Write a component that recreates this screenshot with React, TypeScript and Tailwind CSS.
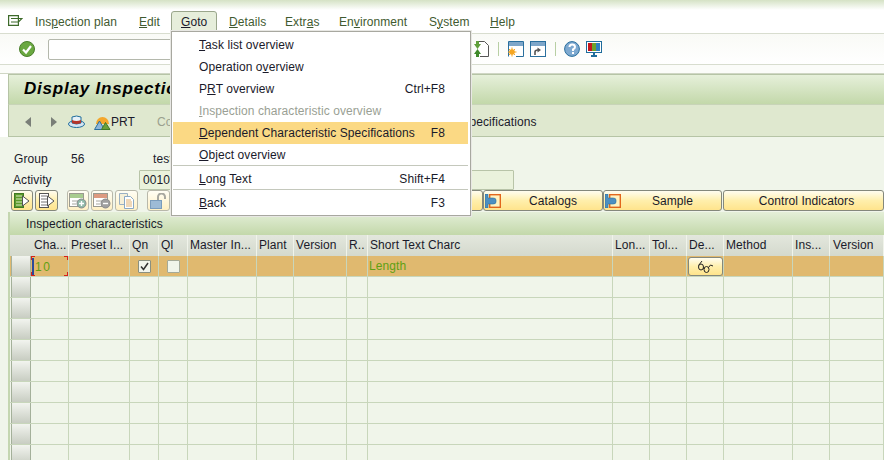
import type { ReactNode } from "react";

const font = "font-['Liberation_Sans',Arial,sans-serif]";

const menus = [
  { pre: "Ins", u: "p", post: "ection plan", w: "w-[104px]" },
  { pre: "", u: "E", post: "dit", w: "w-[42px]" },
  { pre: "", u: "G", post: "oto", w: "w-[48px]", active: true },
  { pre: "", u: "D", post: "etails", w: "w-[56px]" },
  { pre: "Extr", u: "a", post: "s", w: "w-[54px]" },
  { pre: "En", u: "v", post: "ironment", w: "w-[90px]" },
  { pre: "S", u: "y", post: "stem", w: "w-[61px]" },
  { pre: "", u: "H", post: "elp", w: "w-[40px]" },
];

const gotoItems = [
  { pre: "", u: "T", post: "ask list overview", key: "" },
  { pre: "Operation o", u: "v", post: "erview", key: "" },
  { pre: "P", u: "R", post: "T overview", key: "Ctrl+F8" },
  { pre: "", u: "I", post: "nspection characteristic overview", key: "", disabled: true },
  { pre: "", u: "D", post: "ependent Characteristic Specifications", key: "F8", selected: true },
  { pre: "", u: "O", post: "bject overview", key: "" },
  { sep: true, pre: "", u: "L", post: "ong Text", key: "Shift+F4" },
  { sep: true, pre: "", u: "B", post: "ack", key: "F3" },
];

const columns = [
  { label: "Cha...", w: "w-[38px] pl-[3px]" },
  { label: "Preset I...", w: "w-[61px] pl-[2px]" },
  { label: "Qn", w: "w-[29px] pl-[2px]" },
  { label: "Ql", w: "w-[29px] pl-[2px]" },
  { label: "Master In...", w: "w-[69px] pl-[2px]" },
  { label: "Plant", w: "w-[37px] pl-[2px]" },
  { label: "Version", w: "w-[53px] pl-[2px]" },
  { label: "R..", w: "w-[21px] pl-[2px]" },
  { label: "Short Text Charc", w: "w-[245px] pl-[2px]" },
  { label: "Lon...", w: "w-[37px] pl-[2px]" },
  { label: "Tol...", w: "w-[37px] pl-[2px]" },
  { label: "De...", w: "w-[37px] pl-[2px]" },
  { label: "Method", w: "w-[69px] pl-[2px]" },
  { label: "Ins...", w: "w-[37px] pl-[2px]" },
  { label: "Version", w: "w-[54px] pl-[3px]" },
];

function CheckIcon() {
  return (
    <svg width="16" height="16" viewBox="0 0 16 16">
      <circle cx="8" cy="8" r="7.5" fill="#6aa840" stroke="#4a7f2c" />
      <path d="M4 8.5 7 11.5 12 5" fill="none" stroke="#fff" strokeWidth="2.2" />
    </svg>
  );
}

function PageArrows() {
  return (
    <svg width="16" height="16" viewBox="0 0 16 16">
      <path d="M6 .5h5.500l4 4v11H7" fill="#fff" stroke="#555" />
      <path d="M3 0h3v3h2L4.500 8 1 3h2z" fill="#5f9f3a" />
      <path d="M4.500 8 8 13H6v3H3v-3H1z" fill="#3f8a2a" />
    </svg>
  );
}

function NewSession() {
  return (
    <svg width="16" height="16" viewBox="0 0 16 16">
      <path d="M.5 15.500V.5h15v15H8" fill="#fff" stroke="#2a6f9e" />
      <rect x="1" y="1" width="14" height="4" fill="#7ea6c9" />
      <circle cx="4" cy="11" r="2.800" fill="#f5a623" />
      <path d="M4 6.500v9M-.5 11h9M1 8l6 6M7 8l-6 6" stroke="#f5a623" />
    </svg>
  );
}

function Shortcut() {
  return (
    <svg width="16" height="16" viewBox="0 0 16 16">
      <rect x=".5" y=".5" width="15" height="15" fill="#fff" stroke="#2a6f9e" />
      <rect x="1" y="1" width="14" height="4" fill="#7ea6c9" />
      <path d="M5 14v-3q0-2 3-2" fill="none" stroke="#555" strokeWidth="1.600" />
      <path d="M7.500 6.500 11 9l-3.500 2.500z" fill="#555" />
    </svg>
  );
}

function HelpIcon() {
  return (
    <svg width="16" height="16" viewBox="0 0 16 16">
      <circle cx="8" cy="8" r="7.400" fill="#7ea9d0" stroke="#2a6f9e" />
      <path d="M5.500 6q0-2.500 2.700-2.500T11 6q0 1.500-2 2.400V10" fill="none" stroke="#fff" strokeWidth="2" />
      <rect x="8" y="11" width="2" height="2" fill="#fff" />
    </svg>
  );
}

function MonitorIcon() {
  return (
    <svg width="16" height="16" viewBox="0 0 16 16">
      <rect x=".5" y=".5" width="15" height="11" fill="#fff" stroke="#1f6c9c" />
      <rect x="2" y="2" width="4" height="8" fill="#c4161c" />
      <rect x="6" y="2" width="4" height="8" fill="#6fa32b" />
      <rect x="10" y="2" width="4" height="8" fill="#2f7fc1" />
      <path d="M7 12h2v2h2v2H5v-2h2z" fill="#1f6c9c" />
    </svg>
  );
}

function Hat() {
  return (
    <svg width="17" height="13" viewBox="0 0 17 13">
      <ellipse cx="8.500" cy="9" rx="8" ry="3.500" fill="#d4e4f2" stroke="#1f6c9c" />
      <path d="M4 8V2q4.500-2 9 0v6q-4.500 2-9 0z" fill="#e8f1f8" stroke="#1f6c9c" />
      <path d="M4 5q4.500 2 9 0v3q-4.500 2-9 0z" fill="#b5342a" />
    </svg>
  );
}

function Mountains() {
  return (
    <svg width="17" height="16" viewBox="0 0 17 16">
      <path d="M2 10a6.500 7 0 0 1 13 0z" fill="#f4a72c" />
      <path d="M.5 15.500 5.500 7l5 8.500z" fill="#8fb5d8" stroke="#2a6f9e" />
      <path d="M7.500 15.500 11.500 8.500l4.500 7z" fill="#6a9f3a" stroke="#3f7a25" />
    </svg>
  );
}

function ListSelect({ filled }: { filled?: boolean }) {
  return (
    <svg width="16" height="15" viewBox="0 0 16 15">
      <rect x=".5" y=".5" width="9" height="14" fill={filled ? "#5e9a2a" : "#fff"} stroke={filled ? "#3f7a25" : "#555"} />
      <path d="M2 3h6M2 6h6M2 9h6M2 12h6" stroke={filled ? "#d8ecc0" : "#777"} />
      <path d="M8.500 3v10l6.500-5z" fill="#fff" stroke="#555" />
    </svg>
  );
}

function RowOp({ minus }: { minus?: boolean }) {
  return (
    <svg width="18" height="16" viewBox="0 0 18 16">
      <rect x=".5" y=".5" width="14" height="13" fill="#fff" stroke="#9a9a90" />
      <rect x="1" y="1" width="13" height="4" fill={minus ? "#dd9a80" : "#a8cc90"} />
      <path d="M3 8h7M3 11h4" stroke="#a8a8a0" />
      <circle cx="12.500" cy="10.500" r="4.500" fill={minus ? "#a0a0a0" : "#8eb8a8"} stroke="#8a8a8a" />
      <path d={minus ? "M10 10.500h5" : "M10 10.500h5M12.500 8v5"} stroke="#fff" strokeWidth="1.400" />
    </svg>
  );
}

function CopyDoc() {
  return (
    <svg width="16" height="16" viewBox="0 0 16 16">
      <path d="M.5.5h8v11h-8z" fill="#f6f0d8" stroke="#9ab0c4" />
      <path d="M5.500 3.500h6l3 3v9h-9z" fill="#fff" stroke="#8aa8c4" />
      <path d="M7 7h5M7 9h6M7 11h6M7 13h6" stroke="#e0b070" />
    </svg>
  );
}

function Lock() {
  return (
    <svg width="18" height="16" viewBox="0 0 18 16">
      <rect x=".5" y="7.500" width="11" height="8" fill="#9dbbd6" stroke="#7a9cbc" />
      <path d="M8 7V4a3.500 3.500 0 0 1 7 0v2" fill="none" stroke="#a8a8a0" strokeWidth="2" />
    </svg>
  );
}

function TabFlag() {
  return (
    <svg width="16" height="14" viewBox="0 0 16 14">
      <rect x="4.700" y=".7" width="10.600" height="12.600" fill="#fff3c0" stroke="#e2661c" strokeWidth="1.400" />
      <path d="M0 0h3v4h5q3 0 3 2v2q0 2-3 2H3v4H0z" fill="#4d8fc0" stroke="#2a6f9e" strokeWidth=".6" />
    </svg>
  );
}

function Glasses() {
  return (
    <svg width="17" height="13" viewBox="0 0 17 13" fill="none" stroke="#222">
      <path d="M1.500 5.500 5 1" />
      <ellipse cx="4" cy="7" rx="2.500" ry="3" />
      <ellipse cx="9.500" cy="9.500" rx="2.500" ry="3" />
      <path d="M6 8l1.500.5M11.500 7.500l2-2.500 2.500 1" />
    </svg>
  );
}

function SapButton({ className, children, muted }: { className: string; children: ReactNode; muted?: boolean }) {
  return (
    <div
      className={`flex h-[21px] shrink-0 items-center justify-center rounded-[3px] border ${
        muted
          ? "border-[#b8b8aa] bg-gradient-to-b from-[#fffef4] to-[#fff0c4]"
          : "border-[#84887c] bg-gradient-to-b from-[#fffdf0] via-[#ffefac] to-[#ffe48c]"
      } ${className}`}
    >
      {children}
    </div>
  );
}

function FlagButton({ label, className }: { label: string; className: string }) {
  return (
    <SapButton className={`relative pl-[20px] ${className}`}>
      <span className="absolute left-px top-[3px]">
        <TabFlag />
      </span>
      <span>{label}</span>
    </SapButton>
  );
}

export default function App() {
  return (
    <div className={`relative h-[460px] w-[884px] overflow-hidden bg-white text-[12px] tracking-[0.08px] text-[#1a1a2a] ${font}`}>
      {/* menu bar */}
      <div className="h-[10px] bg-gradient-to-b from-[#d5e2c5] to-white" />
      <div className="flex h-[24px] items-center border-b border-[#d8ddcf] pl-[8px]">
        <svg width="15" height="11" viewBox="0 0 15 11" className="mb-[3px] mr-[12px]" fill="none" stroke="#3d6a2a" strokeWidth="1.200">
          <path d="M.6.6h9.800v9.800H.6zM3 3.500h11L10.500 7H3" />
        </svg>
        {menus.map((m) => (
          <div key={m.u + m.pre} className={`${m.w} shrink-0`}>
            <span
              className={
                m.active
                  ? "-ml-[10px] inline-block h-[21px] w-[46px] rounded-t-[3px] border border-[#9aa68c] bg-[#e6eedb] pl-[9px] leading-[20px] text-[#1a1a2a]"
                  : "text-[#3f5a30]"
              }
            >
              {m.pre}
              <u>{m.u}</u>
              {m.post}
            </span>
          </div>
        ))}
      </div>

      {/* system toolbar */}
      <div className="flex h-[31px] items-center border-b border-[#d8ddcf] bg-gradient-to-b from-[#f9faf6] to-white pl-[19px]">
        <CheckIcon />
        <div className="ml-[13px] h-[21px] w-[160px] rounded-[2px] border border-[#b4b8ac] bg-white" />
        <div className="ml-[265px]">
          <PageArrows />
        </div>
        <div className="ml-[9px] h-[14px] w-px bg-[#b8cfa4]" />
        <div className="ml-[9px]">
          <NewSession />
        </div>
        <div className="ml-[6px]">
          <Shortcut />
        </div>
        <div className="ml-[9px] h-[14px] w-px bg-[#b8cfa4]" />
        <div className="ml-[8px]">
          <HelpIcon />
        </div>
        <div className="ml-[6px]">
          <MonitorIcon />
        </div>
      </div>
      <div className="h-[9px] border-b border-[#cfd6c4] bg-[#fbfcf9]" />

      {/* screen */}
      <div className="h-[386px] pl-[8px]">
        <div className="flex h-[30px] items-center whitespace-nowrap border-l border-t border-[#b6c4a6] bg-gradient-to-b from-[#e6f0da] to-[#c3d8aa] pb-[2px] pl-[15px] text-[17px] font-bold italic tracking-[0.8px] text-black">
          Display Inspection Plan Characteristic Overview
        </div>
        <div className="flex h-[33px] items-center border-y border-l border-[#b6c4a6] border-t-[#c8d4b8] bg-[#dfe8cf] pl-[15px] pt-[2px]">
          <svg width="8" height="12" viewBox="0 0 8 12">
            <path d="M7 1v10L1 6z" fill="#7a7f78" />
          </svg>
          <svg width="8" height="12" viewBox="0 0 8 12" className="ml-[18px]">
            <path d="M1 1v10l6-5z" fill="#7a7f78" />
          </svg>
          <div className="ml-[10px]">
            <Hat />
          </div>
          <div className="ml-[9px]">
            <Mountains />
          </div>
          <span>PRT</span>
          <span className="ml-[22px] text-[#9aa08e]">Co</span>
          <span className="ml-[226px]">Dependent Specifications</span>
        </div>

        <div className="-ml-[8px] h-[323px] bg-[#f0f5ea] pt-[12px]">
          <div className="flex h-[20px] items-center pl-[14px]">
            <span className="w-[57px]">Group</span>
            <span className="w-[82px]">56</span>
            <span>test</span>
          </div>
          <div className="flex h-[21px] items-center pl-[13px]">
            <span className="w-[126px]">Activity</span>
            <div className="h-[20px] w-[375px] rounded-[1px] border border-[#b8c4a8] bg-[#eaf2dc] pl-[3px] leading-[18px]">
              0010
            </div>
          </div>

          <div className="flex h-[21px] pl-[11px]">
            <SapButton className="w-[22px]">
              <ListSelect filled />
            </SapButton>
            <SapButton className="ml-[2px] w-[23px]">
              <ListSelect />
            </SapButton>
            <SapButton muted className="ml-[9px] w-[22px]">
              <RowOp />
            </SapButton>
            <SapButton muted className="ml-[2px] w-[22px]">
              <RowOp minus />
            </SapButton>
            <SapButton muted className="ml-[2px] w-[23px]">
              <CopyDoc />
            </SapButton>
            <SapButton muted className="ml-[9px] w-[23px]">
              <Lock />
            </SapButton>
            <FlagButton label="Characteristics" className="ml-[1px] w-[312px]" />
            <FlagButton label="Catalogs" className="w-[120px]" />
            <FlagButton label="Sample" className="w-[119px]" />
            <SapButton className="ml-px w-[161px] pl-[6px]">Control Indicators</SapButton>
          </div>

          {/* table */}
          <div className="ml-[8px] mt-px h-[248px] overflow-hidden border-l-2 border-[#c4d6b0] bg-[#f0f5ea]">
            <div className="flex h-[23px] items-center bg-gradient-to-b from-[#e4efd8] to-[#c3d8aa] pl-[16px]">
              Inspection characteristics
            </div>
            <div className="flex h-[21px] bg-gradient-to-b from-[#e3e7dd] to-[#d4d9cd] pl-[21px]">
              {columns.map((c) => (
                <div key={c.label + c.w} className={`${c.w} shrink-0 overflow-hidden whitespace-nowrap border-r border-[#f0f3ea] leading-[20px]`}>
                  {c.label}
                </div>
              ))}
            </div>
            {Array.from({ length: 10 }, (_, row) => (
              <div key={row} className={`flex h-[21px] border-b border-[#c8d6bb] ${row === 0 ? "bg-[#e0b96f]" : ""}`}>
                <div className="ml-px h-full w-[20px] shrink-0 border-x border-[#a4b09a] bg-gradient-to-b from-[#f2f4ef] to-[#c8cdc2]" />
                {columns.map((c, i) => (
                  <div key={c.label + c.w} className={`${c.w} relative flex shrink-0 items-center justify-center border-r border-[#c8d6bb] !pl-0`}>
                    {row === 0 && i === 0 && (
                      <>
                        <span className="absolute left-[1px] top-[2px] border-l-2 border-[#2a4a9a] pl-px tracking-[1.5px] text-[#5fa012]">
                          10
                        </span>
                        <span className="absolute left-0 top-0 h-[4px] w-[4px] border-l border-t border-[#d8201a]" />
                        <span className="absolute right-0 top-0 h-[4px] w-[4px] border-r border-t border-[#d8201a]" />
                        <span className="absolute bottom-0 left-0 h-[4px] w-[4px] border-b border-l border-[#d8201a]" />
                        <span className="absolute bottom-0 right-0 h-[4px] w-[4px] border-b border-r border-[#d8201a]" />
                      </>
                    )}
                    {row === 0 && i === 2 && (
                      <span className="flex h-[13px] w-[13px] items-center justify-center rounded-[1px] border border-[#8a9080] bg-[#f2f5ec]">
                        <svg width="9" height="9" viewBox="0 0 9 9" fill="none" stroke="#333" strokeWidth="1.500">
                          <path d="M1 4.500 3.500 7.500 8 1" />
                        </svg>
                      </span>
                    )}
                    {row === 0 && i === 3 && (
                      <span className="h-[13px] w-[13px] rounded-[1px] border border-[#a4aa98] bg-[#f0f5ea]" />
                    )}
                    {row === 0 && i === 8 && (
                      <span className="absolute left-[1px] text-[#5fa012]">Length</span>
                    )}
                    {row === 0 && i === 11 && (
                      <SapButton className="!h-[19px] w-[35px]">
                        <Glasses />
                      </SapButton>
                    )}
                  </div>
                ))}
              </div>
            ))}
          </div>
        </div>
      </div>

      {/* Goto dropdown */}
      <div className="absolute left-[171px] top-[31px] w-[300px] border border-[#a8a8a0] bg-white pb-px pl-[1px] pr-[2px] pt-[2px] shadow-[0_0_0_1px_#e8e8e4]">
        {gotoItems.map((it) => (
          <div key={it.u + it.post} className={it.sep ? "-mt-px border-t border-[#c4c8bc] pt-[2px]" : ""}>
            <div
              className={`flex h-[22px] items-center justify-between pl-[26px] pr-[23px] ${
                it.selected ? "bg-[#fbd984]" : ""
              } ${it.disabled ? "text-[#9a9f94]" : ""}`}
            >
              <span>
                {it.pre}
                <u>{it.u}</u>
                {it.post}
              </span>
              <span>{it.key}</span>
            </div>
          </div>
        ))}
      </div>
    </div>
  );
}
